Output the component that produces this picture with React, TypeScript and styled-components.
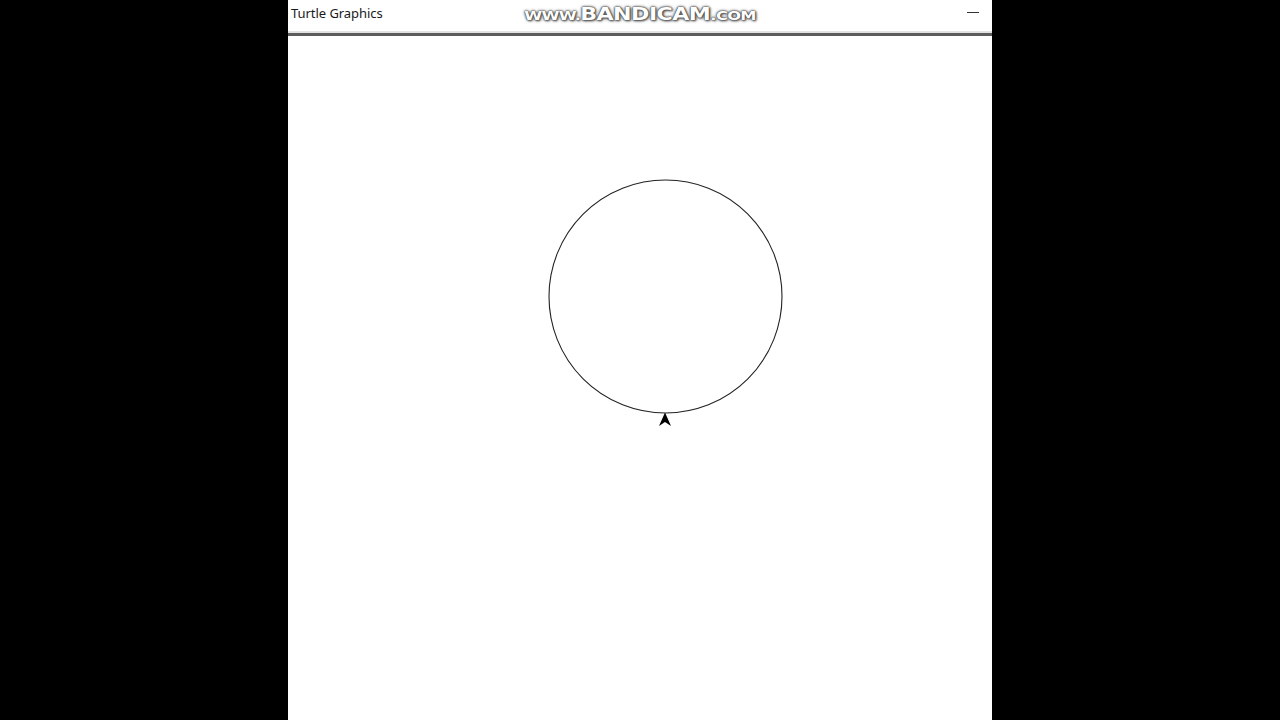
import * as React from 'react';
import styled, { createGlobalStyle } from 'styled-components';

const GlobalStyle = createGlobalStyle`
    html, body {
        margin: 0;
        padding: 0;
        background: #000;
        width: 100%;
        height: 100%;
        overflow: hidden;
    }
    #root {
        height: 100%;
    }
`;

const Screen = styled.div`
    display: flex;
    justify-content: center;
    height: 720px;
    background: #000;
`;

const Window = styled.div`
    position: relative;
    display: flex;
    flex-direction: column;
    width: 704px;
    height: 720px;
    background: #fff;
`;

const TitleBar = styled.div`
    display: flex;
    align-items: center;
    justify-content: space-between;
    height: 31px;
    padding: 0 13px 0 3px;
    border-bottom: 2px solid #e2e2e2;
    font-family: "Noto Sans", "Open Sans", sans-serif;
    font-size: 13px;
    color: #1a1a1a;
`;

const Title = styled.span`
    margin-top: -6px;
    letter-spacing: -0.05px;
`;

const Minimize = styled.span`
    display: block;
    width: 12px;
    height: 1px;
    margin-top: -6px;
    background: #333;
`;

const Divider = styled.div`
    height: 3px;
    background: #5c5c5c;
`;

const Canvas = styled.svg`
    display: block;
    flex: 1;
    width: 100%;
`;

const Watermark = styled.div`
    position: absolute;
    top: 4px;
    left: 50%;
    display: flex;
    align-items: baseline;
    transform: translateX(-50%) scaleX(1.3);
    transform-origin: center;
    font-family: "DejaVu Sans", "Liberation Sans", sans-serif;
    font-weight: bold;
    color: #fff;
    white-space: nowrap;
    text-shadow:
        0 0 1px #333,
        0 0 2px #444,
        0 0 3px #777,
        1px 1px 2px #555;
`;

const Mark = styled.span<{ $small?: boolean }>`
    font-size: ${props => (props.$small ? '12.5px' : '17px')};
    text-transform: ${props => (props.$small ? 'uppercase' : 'none')};
    letter-spacing: ${props => (props.$small ? '-0.5px' : '-0.4px')};
`;

export default function App() {
    return (
        <>
            <GlobalStyle />
            <Screen>
                <Window>
                    <TitleBar>
                        <Title>Turtle Graphics</Title>
                        <Minimize />
                    </TitleBar>
                    <Divider />
                    <Canvas viewBox="0 0 704 684">
                        <circle cx="377.5" cy="260.5" r="116.5" fill="none" stroke="#222" strokeWidth="1.1" />
                        <polygon points="377,376.5 383,390 377,386 371,390" fill="#000" />
                    </Canvas>
                    <Watermark>
                        <Mark $small>www.</Mark>
                        <Mark>BANDICAM</Mark>
                        <Mark $small>.com</Mark>
                    </Watermark>
                </Window>
            </Screen>
        </>
    );
}
